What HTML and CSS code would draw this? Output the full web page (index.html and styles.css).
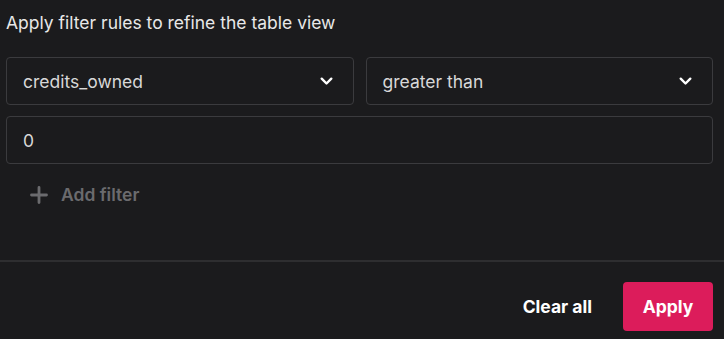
FILE: index.html
```html
<!DOCTYPE html>
<html lang="en">
<head>
    <meta charset="UTF-8">
    <title>Filter</title>
    <link rel="stylesheet" href="styles.css">
</head>
<body>

<div class="panel">
    <div class="panel-body">
        <p class="hint">Apply filter rules to refine the table view</p>

        <div class="row">
            <div class="select">
                <span>credits_owned</span>
                <svg class="chevron" viewBox="0 0 13 9" width="13" height="9"><path d="M1.7 1.7 6.5 6.5l4.8-4.8" fill="none" stroke="#fff" stroke-width="2.4" stroke-linecap="round" stroke-linejoin="round"/></svg>
            </div>
            <div class="select">
                <span>greater than</span>
                <svg class="chevron" viewBox="0 0 13 9" width="13" height="9"><path d="M1.7 1.7 6.5 6.5l4.8-4.8" fill="none" stroke="#fff" stroke-width="2.4" stroke-linecap="round" stroke-linejoin="round"/></svg>
            </div>
        </div>

        <div class="input">0</div>

        <div class="add-filter">
            <svg viewBox="0 0 18 18" width="18" height="18"><path d="M9 1.5v15M1.5 9h15" stroke="#6b6b6e" stroke-width="2.8" stroke-linecap="round"/></svg>
            <span>Add filter</span>
        </div>
    </div>

    <!-- footer actions -->
    <div class="panel-footer">
        <button class="btn-link">Clear all</button>
        <button class="btn-primary">Apply</button>
    </div>
</div>

</body>
</html>
```

FILE: styles.css
```css
/* Basic reset */
body {
    margin: 0;
    background-color: #1b1b1d;
    color: #e6e6e6;
    font-family: Inter, "Noto Sans", Arial, sans-serif;
}

.panel {
    width: 724px;
    height: 339px;
    display: flex;
    flex-direction: column;
}

.panel-body {
    padding: 12px 11px 0 6px;
    flex: 1;
}

.hint {
    margin: 0 0 24px 0;
    font-size: 17.5px;
    line-height: 21px;
    color: #e8e8e8;
}

.row {
    display: flex;
    gap: 12px;
    margin-bottom: 11px;
}

.select,
.input {
    box-sizing: border-box;
    height: 48px;
    border: 1px solid #3b3b3e;
    border-radius: 4px;
    display: flex;
    align-items: center;
    padding: 0 20px 0 16px;
    font-size: 17.5px;
    color: #d8d8d8;
}

.select {
    flex: 1;
    justify-content: space-between;
}

.add-filter {
    display: flex;
    align-items: center;
    gap: 13px;
    margin: 20px 0 0 24px;
    font-size: 17.5px;
    font-weight: 600;
    color: #6b6b6e;
}

.panel-footer {
    border-top: 2px solid #2e2e30;
    display: flex;
    justify-content: flex-end;
    align-items: flex-start;
    gap: 31px;
    padding: 20px 11px 0 0;
    height: 57px;
}

.btn-link {
    background: none;
    border: none;
    color: #ffffff;
    font-family: inherit;
    font-size: 17.5px;
    font-weight: 700;
    padding: 0;
    height: 49px;
}

.btn-primary {
    background-color: #dc1c5b;
    border: none;
    border-radius: 4px;
    color: #ffffff;
    font-family: inherit;
    font-size: 17.5px;
    font-weight: 700;
    width: 90px;
    height: 49px;
}
```
